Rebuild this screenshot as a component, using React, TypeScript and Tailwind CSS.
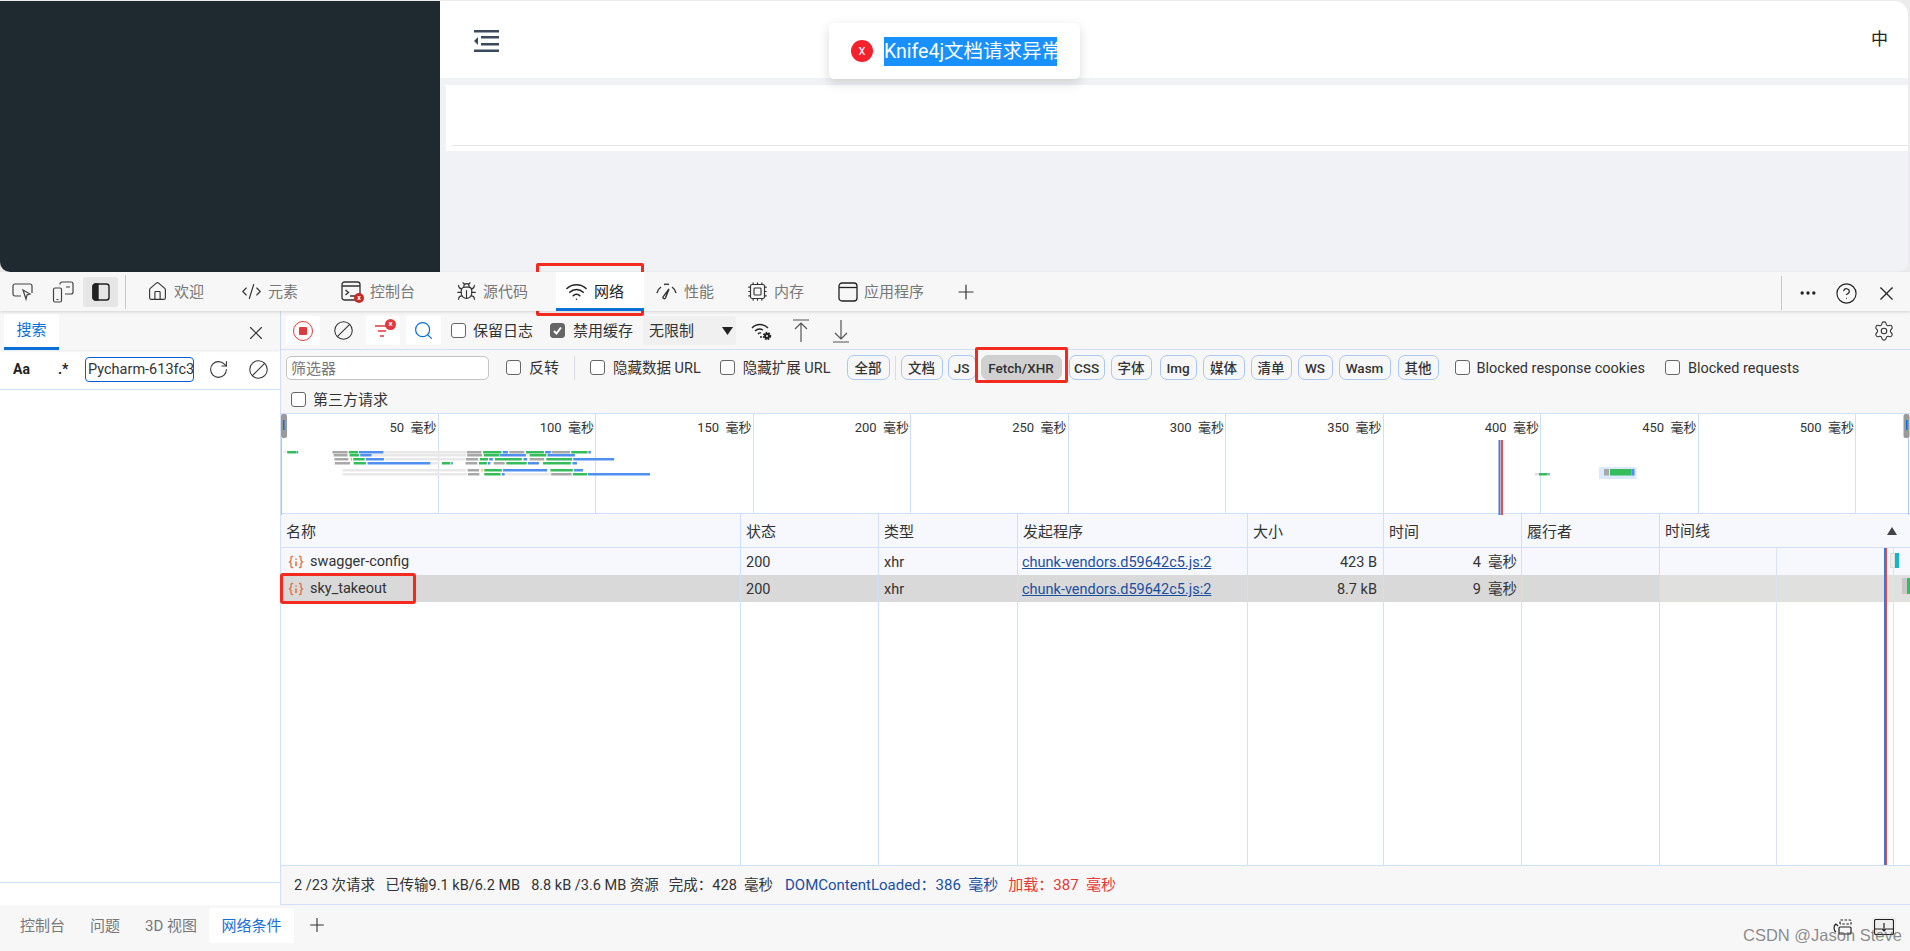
import { Ban, Bug, CircleHelp, CodeXml, Cpu, Ellipsis, House, Plus, RotateCw, Search, Settings, Wifi, X } from 'lucide-react';

const px = (z: number) => 270 + z / 2.45;

// overview bars, [start, end, kind] measured along the waterfall
type Bar = [number, number, 'g' | 'n' | 'b' | 'l' | 'y'];
const barColors = { g: '#a8a8a8', n: '#35bd5c', b: '#4f8ff0', l: '#e8e8e8', y: '#f2b530' };

const waterfall: { y: number; bars: Bar[] }[] = [
  { y: 450, bars: [[35, 40, 'l'], [42, 65, 'n'], [66, 69, 'b'], [153, 190, 'g'], [193, 216, 'n'], [218, 278, 'b'], [280, 480, 'l'], [482, 518, 'g'], [522, 567, 'n'], [570, 583, 'b'], [586, 623, 'g'], [627, 671, 'n'], [674, 688, 'b'], [690, 735, 'g'], [738, 778, 'n'], [780, 786, 'b']] },
  { y: 453, bars: [[156, 190, 'g'], [195, 218, 'n'], [221, 249, 'b'], [250, 480, 'l'], [483, 520, 'g'], [524, 562, 'n'], [563, 627, 'b'], [629, 633, 'l'], [636, 677, 'n'], [680, 747, 'b']] },
  { y: 457, bars: [[158, 192, 'g'], [198, 201, 'y'], [204, 232, 'n'], [235, 279, 'b'], [281, 478, 'l'], [480, 510, 'g'], [514, 534, 'n'], [537, 546, 'b'], [551, 617, 'n'], [621, 630, 'b'], [636, 672, 'g'], [677, 740, 'n'], [743, 843, 'b']] },
  { y: 461, bars: [[159, 196, 'g'], [205, 235, 'n'], [239, 393, 'b'], [395, 415, 'l'], [421, 442, 'n'], [444, 448, 'b'], [479, 508, 'g'], [512, 532, 'n'], [534, 540, 'b'], [548, 575, 'g'], [579, 629, 'n'], [632, 659, 'b'], [669, 737, 'n'], [741, 752, 'b']] },
  { y: 468, bars: [[178, 480, 'l'], [484, 512, 'g'], [518, 521, 'y'], [525, 568, 'n'], [571, 679, 'b'], [687, 742, 'n'], [745, 767, 'b']] },
  { y: 472, bars: [[178, 483, 'l'], [485, 513, 'g'], [525, 565, 'n'], [568, 575, 'b'], [577, 688, 'l'], [689, 739, 'g'], [742, 777, 'n'], [779, 931, 'b']] },
];

function InspectIcon() {
  return (
    <svg width="22" height="20" viewBox="0 0 22 20" fill="none" stroke="#444" strokeWidth="1.2">
      <path d="M9 14H3a2 2 0 0 1-2-2V4a2 2 0 0 1 2-2h15a2 2 0 0 1 2 2v7" />
      <path d="M11 8l7 4-3 1 -1 4z" />
    </svg>
  );
}

function DeviceIcon() {
  return (
    <svg width="22" height="22" viewBox="0 0 22 22" fill="none" stroke="#444" strokeWidth="1.2">
      <path d="M8 3.5V3a2 2 0 0 1 2-2h9a2 2 0 0 1 2 2v8a2 2 0 0 1-2 2h-6" />
      <rect x="1.5" y="7" width="8" height="14" rx="1.5" />
      <path d="M4.5 18.5h2M14 6h4" />
    </svg>
  );
}

function DockIcon() {
  return (
    <svg width="18" height="18" viewBox="0 0 18 18" fill="none" stroke="#222" strokeWidth="1.4">
      <rect x="1" y="1" width="16" height="16" rx="2.5" />
      <path d="M1 3.5a2.5 2.5 0 0 1 2.5-2.5H6v16H3.5A2.5 2.5 0 0 1 1 14.5z" fill="#222" />
    </svg>
  );
}

function ConsoleIcon() {
  return (
    <div className="relative w-[23px] h-[22px]">
      <svg width="20" height="20" viewBox="0 0 20 20" fill="none" stroke="#333" strokeWidth="1.3">
        <rect x="1" y="1" width="18" height="18" rx="2.5" />
        <path d="M1 5h18M4.5 9l3 2.5-3 2.5M9 15h5" />
      </svg>
      <div className="absolute right-0 bottom-0 w-[10px] h-[10px] rounded-full bg-[#c9282d] text-white text-[7px] leading-[10px] text-center font-bold">x</div>
    </div>
  );
}

function GaugeIcon() {
  return (
    <svg width="23" height="20" viewBox="0 0 23 20" fill="none" stroke="#333" strokeWidth="1.4">
      <path d="M2 11a9.5 9.5 0 0 1 4-6M9 2.5a9.5 9.5 0 0 1 5 0M17 5a9.5 9.5 0 0 1 4 6" />
      <path d="M14 7l-3.500 9a1.400 1.400 0 0 1-2.600-.8z" />
    </svg>
  );
}

function AppIcon() {
  return (
    <svg width="20" height="20" viewBox="0 0 20 20" fill="none" stroke="#222" strokeWidth="1.3">
      <rect x="1" y="1" width="18" height="18" rx="3" />
      <path d="M1 5.5h18" />
    </svg>
  );
}

function NetworkGear() {
  return (
    <svg width="22" height="22" viewBox="0 0 22 22" fill="none" stroke="#222" strokeWidth="1.4">
      <path d="M1 8a11 11 0 0 1 16 0M4 11a7 7 0 0 1 8-1M7 14a3 3 0 0 1 3-1" />
      <circle cx="10" cy="17" r="1" fill="#222" stroke="none" />
      <circle cx="16" cy="16" r="3" fill="#222" stroke="#222" strokeDasharray="1.5 1" strokeWidth="2.4" />
      <circle cx="16" cy="16" r="1" fill="#f7f7f7" stroke="none" />
    </svg>
  );
}

function XhrIcon() {
  return (
    <svg width="16" height="16" viewBox="0 0 16 16" fill="none" stroke="#e2703a" strokeWidth="1.3">
      <path d="M5 2.5H4a1 1 0 0 0-1 1V6.5L1.5 8 3 9.5v3a1 1 0 0 0 1 1h1" />
      <path d="M11 2.5h1a1 1 0 0 1 1 1V6.5L14.5 8 13 9.5v3a1 1 0 0 1-1 1h-1" />
      <path d="M8 7.5v4.5M8 4.5v1.3" strokeWidth="1.6" />
    </svg>
  );
}

function Check({ checked = false }: { checked?: boolean }) {
  return (
    <span className={`w-[15px] h-[15px] shrink-0 rounded-[3px] border flex items-center justify-center ${checked ? 'bg-[#666] border-[#666]' : 'bg-white border-[#666]'}`}>
      {checked && (
        <svg width="11" height="11" viewBox="0 0 11 11" fill="none" stroke="#fff" strokeWidth="2">
          <path d="M2 6l2.5 2.5L9 2.5" />
        </svg>
      )}
    </span>
  );
}

function Label({ children, className = '' }: { children: React.ReactNode; className?: string }) {
  return <span className={`${className} pt-[2px]`}>{children}</span>;
}

function Chip({ label, width, active = false, className = '' }: { label: string; width: string; active?: boolean; className?: string }) {
  return (
    <span className={`${width} ${className} h-[25px] pt-[1px] shrink-0 rounded-[7px] border flex items-center justify-center text-[13.5px] font-medium text-[#333] ${active ? 'bg-[#d0d0d0] border-[#d0d0d0]' : 'border-[#a9c8f5]'}`}>
      {label}
    </span>
  );
}

const tabs = [
  { label: '欢迎', icon: <House size={21} strokeWidth={1.3} color="#333" />, cls: 'ml-[12px] w-[76px]' },
  { label: '元素', icon: <CodeXml size={21} strokeWidth={1.3} color="#333" />, cls: 'ml-[18px] w-[76px]' },
  { label: '控制台', icon: <ConsoleIcon />, cls: 'ml-[24px] w-[90px]' },
  { label: '源代码', icon: <Bug size={21} strokeWidth={1.3} color="#333" />, cls: 'ml-[25px] w-[92px]' },
  { label: '网络', icon: <Wifi size={23} strokeWidth={1.6} color="#222" />, cls: 'ml-[17px] w-[88px]', active: true },
  { label: '性能', icon: <GaugeIcon />, cls: 'ml-[2px] w-[77px]' },
  { label: '内存', icon: <Cpu size={21} strokeWidth={1.3} color="#333" />, cls: 'ml-[15px] w-[76px]' },
  { label: '应用程序', icon: <AppIcon />, cls: 'ml-[15px] w-[105px]' },
];

const cols = [
  { name: '名称', cls: 'w-[460px]' },
  { name: '状态', cls: 'w-[138px]' },
  { name: '类型', cls: 'w-[139px]' },
  { name: '发起程序', cls: 'w-[230px]' },
  { name: '大小', cls: 'w-[136px]' },
  { name: '时间', cls: 'w-[138px]' },
  { name: '履行者', cls: 'w-[138px]' },
];

const rows = [
  { name: 'swagger-config', size: '423 B', time: '4  毫秒', bg: 'bg-[#f6f8fd]', tl: 'bg-[#f6f8fd]' },
  { name: 'sky_takeout', size: '8.7 kB', time: '9  毫秒', bg: 'bg-[#d9d9d9]', tl: 'bg-[#e0e1df]' },
];

const marks = ['50  毫秒', '100  毫秒', '150  毫秒', '200  毫秒', '250  毫秒', '300  毫秒', '350  毫秒', '400  毫秒', '450  毫秒', '500  毫秒'];

export default function App() {
  return (
    <div className="relative w-[1910px] h-[951px] overflow-hidden bg-[#f7f7f7] text-[#333] text-[14.5px] whitespace-pre font-['Roboto','Noto_Sans_CJK_SC',sans-serif]">
      {/* page under inspection */}
      <div className="flex h-[272px] pt-px pr-[2px] bg-[#ececec]">
        <div className="w-[440px] bg-[#1f2a30] rounded-bl-[10px]" />
        <div className="flex-1 flex flex-col bg-[#f0f2f5] rounded-tr-[14px] rounded-br-[10px] overflow-hidden">
          <div className="h-[77px] bg-white flex items-center justify-between pl-[34px] pr-[20px] pt-[3px]">
            <svg width="25" height="22" viewBox="0 0 25 22" fill="#3b4a5a">
              <path d="M0 0h25v2.5H0zM0 19.500h25V22H0zM7 6h18v2.500H7zM7 13h18v2.500H7zM4 7v8L0 11z" />
            </svg>
            <span className="text-[17px] text-[#222] leading-none mb-[4px]">中</span>
          </div>
          <div className="mt-[7px] ml-[6px] h-[66px] bg-white pt-[60px] pl-[6px]">
            <div className="h-[1px] bg-[#e6e6e6]" />
          </div>
        </div>
      </div>

      {/* devtools main tab bar */}
      <div className="relative z-10 h-[39px] flex items-center bg-[#f7f7f7] shadow-[0_1px_3px_rgba(0,0,0,0.15)]">
        <div className="w-[126px] h-[34px] flex items-center border-r border-[#c9c9c9] pl-[12px]">
          <span className="w-[22px] flex justify-center"><InspectIcon /></span>
          <span className="ml-[18px] w-[22px] flex justify-center"><DeviceIcon /></span>
          <span className="ml-[9px] w-[35px] h-[30px] rounded-[3px] bg-[#e6e6e6] flex items-center justify-center"><DockIcon /></span>
        </div>
        {tabs.map(t => (
          <div key={t.label} className={`${t.cls} h-full flex items-center gap-[6px] pl-[9px] ${t.active ? 'bg-white border-b-[3px] border-[#0a6fd6] text-[#222] pt-[3px]' : 'text-[#777]'}`}>
            {t.icon}
            <span className="text-[15px] pt-[1px]">{t.label}</span>
          </div>
        ))}
        <Plus size={24} strokeWidth={1.2} color="#333" className="ml-[20px]" />
        <div className="ml-auto w-[129px] h-[34px] border-l border-[#c9c9c9] flex items-center pl-[16px] mb-[-3px]">
          <Ellipsis size={20} color="#222" />
          <CircleHelp size={23} strokeWidth={1.2} color="#222" className="ml-[17px]" />
          <X size={23} strokeWidth={1.2} color="#222" className="ml-[17px]" />
        </div>
      </div>

      <div className="flex h-[594px]">
        {/* search panel */}
        <div className="w-[281px] flex flex-col bg-white border-r border-[#d0e0f8]">
          <div className="h-[39px] flex items-start justify-between bg-[#f7f7f7] pl-[4px] pr-[13px] shadow-[0_1px_2px_rgba(0,0,0,0.1)]">
            <span className="mt-[3px] w-[55px] h-[36px] bg-white border-b-[3px] border-[#0a6fd6] text-[#0a6fd6] text-[15px] flex items-center justify-center">搜索</span>
            <X size={22} strokeWidth={1.2} color="#333" className="mt-[11px]" />
          </div>
          <div className="h-[40px] flex items-center border-b border-[#d0e0f8]">
            <span className="ml-[13px] w-[20px] text-[14px] font-bold text-[#222]">Aa</span>
            <span className="ml-[25px] w-[16px] text-[14px] font-bold text-[#222]">.*</span>
            <input readOnly value="Pycharm-613fc3" className="ml-[11px] w-[109px] h-[25px] border border-[#0a5fd0] rounded-[4px] pl-[2px] text-[14.5px] text-[#333] outline-none" />
            <RotateCw size={21} strokeWidth={1.2} color="#333" className="ml-[14px]" />
            <Ban size={21} strokeWidth={1.2} color="#333" className="ml-[19px] rotate-90" />
          </div>
          <div className="flex-1" />
          <div className="h-[23px] border-t border-[#d0e0f8]" />
        </div>

        {/* network panel */}
        <div className="flex-1 flex flex-col min-w-0">
          <div className="h-[39px] flex items-center border-b border-[#d0e0f8] bg-[#f7f7f7] pl-[5px] pt-[1px]">
            <span className="w-[34px] h-[29px] bg-white rounded-[2px] flex items-center justify-center">
              <span className="w-[20px] h-[20px] rounded-full border border-[#e0393e] flex items-center justify-center">
                <span className="w-[8px] h-[8px] rounded-[1px] bg-[#e0393e]" />
              </span>
            </span>
            <span className="ml-[6px] w-[34px] flex justify-center"><Ban size={21} strokeWidth={1.2} color="#333" className="rotate-90" /></span>
            <span className="relative ml-[6px] w-[34px] h-[29px] bg-white rounded-[2px] flex items-center justify-center">
              <svg width="18" height="14" viewBox="0 0 18 14" stroke="#e0393e" strokeWidth="1.3"><path d="M1 2h14M4 7h8M6 12h4" /></svg>
              <span className="absolute right-[4px] top-[3px] w-[11px] h-[11px] rounded-full bg-[#e0393e] text-white text-[8px] leading-[10px] text-center font-bold">x</span>
            </span>
            <span className="ml-[6px] w-[35px] h-[29px] bg-white rounded-[2px] flex items-center justify-center"><Search size={21} strokeWidth={1.4} color="#0a6fd6" /></span>
            <span className="ml-[10px]"><Check /></span>
            <Label className="ml-[7px] text-[15px]">保留日志</Label>
            <span className="ml-[17px]"><Check checked /></span>
            <Label className="ml-[8px] text-[15px]">禁用缓存</Label>
            <span className="ml-[10px] w-[93px] h-[29px] bg-[#f0f0f0] rounded-[2px] flex items-center justify-between pl-[6px] pr-[2px]">
              <Label className="text-[15px]">无限制</Label>
              <svg width="12" height="8" viewBox="0 0 12 8" fill="#222"><path d="M0 0h11L5.500 8z" /></svg>
            </span>
            <span className="ml-[15px]"><NetworkGear /></span>
            <svg className="ml-[20px]" width="16" height="24" viewBox="0 0 16 24" fill="none" stroke="#555" strokeWidth="1.2"><path d="M0 1h16M8 23V4M2 10l6-6 6 6" /></svg>
            <svg className="ml-[24px]" width="16" height="24" viewBox="0 0 16 24" fill="none" stroke="#555" strokeWidth="1.2"><path d="M0 23h16M8 1v19M2 14l6 6 6-6" /></svg>
            <Settings size={22} strokeWidth={1.2} color="#333" className="ml-auto mr-[15px]" />
          </div>

          <div className="h-[63px] bg-[#f7f7f7] pl-[5px] pt-[5px]">
            <div className="h-[25px] flex items-center">
              <input readOnly placeholder="筛选器" className="w-[203px] h-[24px] pt-[2px] bg-white border border-[#c4c4c4] rounded-[5px] pl-[4px] text-[15px] outline-none placeholder:text-[#777]" />
              <span className="ml-[17px]"><Check /></span>
              <Label className="ml-[8px] text-[15px]">反转</Label>
              <span className="ml-[15px] w-px h-[24px] bg-[#d4deea]" />
              <span className="ml-[15px]"><Check /></span>
              <Label className="ml-[8px]">隐藏数据 URL</Label>
              <span className="ml-[19px]"><Check /></span>
              <Label className="ml-[8px]">隐藏扩展 URL</Label>
              <Chip label="全部" width="w-[43px]" className="ml-[16px]" />
              <span className="ml-[5px] w-px h-[24px] bg-[#d4deea]" />
              <Chip label="文档" width="w-[42px]" className="ml-[5px]" />
              <Chip label="JS" width="w-[28px]" className="ml-[5px]" />
              <Chip label="Fetch/XHR" width="w-[81px]" active className="ml-[5px]" />
              <Chip label="CSS" width="w-[36px]" className="ml-[7px]" />
              <Chip label="字体" width="w-[41px]" className="ml-[6px]" />
              <Chip label="Img" width="w-[37px]" className="ml-[8px]" />
              <Chip label="媒体" width="w-[42px]" className="ml-[6px]" />
              <Chip label="清单" width="w-[41px]" className="ml-[6px]" />
              <Chip label="WS" width="w-[35px]" className="ml-[6px]" />
              <Chip label="Wasm" width="w-[52px]" className="ml-[6px]" />
              <Chip label="其他" width="w-[41px]" className="ml-[7px]" />
              <span className="ml-[16px]"><Check /></span>
              <Label className="ml-[7px]">Blocked response cookies</Label>
              <span className="ml-[20px]"><Check /></span>
              <Label className="ml-[8px]">Blocked requests</Label>
            </div>
            <div className="mt-[7px] h-[24px] flex items-center pl-[5px]">
              <Check />
              <Label className="ml-[7px] text-[15px]">第三方请求</Label>
            </div>
          </div>

          {/* overview */}
          <div className="relative h-[101px] flex bg-white border-t border-b border-[#d0e0f8]">
            {marks.map(m => (
              <div key={m} className="w-[157.5px] shrink-0 border-r border-[#d0e0f8] text-right pr-[1px] text-[13px] leading-[27px] text-[#333]">
                {m}
              </div>
            ))}
            <svg className="absolute left-0 top-0" width="1629" height="101" viewBox="281 413 1629 101">
              {waterfall.map(row =>
                row.bars.map(([a, b, k]) => (
                  <rect key={`${row.y}-${a}`} x={px(a)} y={row.y} width={px(b) - px(a)} height={2.5} fill={barColors[k]} />
                ))
              )}
              <rect x={1498.5} y={439} width={2} height={75} fill="#5a78c8" />
              <rect x={1501} y={439} width={2} height={75} fill="#e0524f" />
              <rect x={1535} y={472} width={7} height={2.5} fill="#e0e0e0" />
              <rect x={1539} y={472} width={8} height={2.5} fill="#35bd5c" />
              <rect x={1547} y={472} width={3} height={2.5} fill="#8ab4f0" />
              <rect x={1599} y={466} width={37.500} height={12} fill="#dce8fb" />
              <rect x={1604} y={468} width={5} height={6.500} fill="#a8a8a8" />
              <rect x={1610} y={468} width={21.500} height={6.500} fill="#35bd5c" />
              <rect x={1631.500} y={468} width={3} height={6.500} fill="#4f8ff0" />
              <rect x={281} y={413} width={6} height={24} rx={2} fill="#9a9a9a" />
              <rect x={283} y={419} width={1.500} height={10} fill="#0a6fd6" />
              <rect x={1903.500} y={413} width={6} height={24} rx={2} fill="#9a9a9a" />
              <rect x={1906} y={419} width={1.500} height={10} fill="#0a6fd6" />
              <rect x={281} y={437} width={1} height={77} fill="#a9c8f5" />
              <rect x={1908} y={437} width={1} height={77} fill="#a9c8f5" />
            </svg>
          </div>

          {/* request table */}
          <div className="h-[34px] flex bg-[#f6f8fd] border-b border-[#d0e0f8] leading-[36px] text-[15px]">
            {cols.map(c => (
              <div key={c.name} className={`${c.cls} shrink-0 border-r border-[#d0e0f8] pl-[5px]`}>{c.name}</div>
            ))}
            <div className="flex-1 flex justify-between pl-[5px] pr-[13px] items-center">
              时间线
              <svg width="10" height="8" viewBox="0 0 10 8" fill="#444"><path d="M5 0l5 8H0z" /></svg>
            </div>
          </div>
          {rows.map(r => (
            <div key={r.name} className="h-[27px] flex leading-[29px]">
              <div className={`${r.bg} w-[460px] shrink-0 border-r border-[#d0e0f8] pl-[7px] flex items-center gap-[6px]`}><XhrIcon /><span>{r.name}</span></div>
              <div className={`${r.bg} w-[138px] shrink-0 border-r border-[#d0e0f8] pl-[5px]`}>200</div>
              <div className={`${r.bg} w-[139px] shrink-0 border-r border-[#d0e0f8] pl-[5px]`}>xhr</div>
              <div className={`${r.bg} w-[230px] shrink-0 border-r border-[#d0e0f8] pl-[4px] text-[#1a4fa0] underline`}>chunk-vendors.d59642c5.js:2</div>
              <div className={`${r.bg} w-[136px] shrink-0 border-r border-[#d0e0f8] pr-[6px] text-right`}>{r.size}</div>
              <div className={`${r.bg} w-[138px] shrink-0 border-r border-[#d0e0f8] pr-[4px] text-right`}>{r.time}</div>
              <div className={`${r.bg} w-[138px] shrink-0 border-r border-[#d0e0f8]`} />
              <div className={`${r.tl} flex-1`} />
            </div>
          ))}
          <div className="relative flex-1 flex bg-white">
            {cols.map(c => (
              <div key={c.name} className={`${c.cls} shrink-0 border-r border-[#d0e0f8]`} />
            ))}
          </div>

          <div className="h-[40px] flex items-center bg-[#f7f7f7] border-t border-b border-[#d0e0f8] pl-[13px] pt-[1px]">
            <span>2 /23 次请求</span>
            <span className="ml-[10px]">已传输9.1 kB/6.2 MB</span>
            <span className="ml-[11px]">8.8 kB /3.6 MB 资源</span>
            <span className="ml-[10px]">完成：428  毫秒</span>
            <span className="ml-[12px] text-[15px] text-[#1a4fa0]">DOMContentLoaded：386  毫秒</span>
            <span className="ml-[10px] text-[15px] text-[#e53935]">加载：387  毫秒</span>
          </div>
        </div>
      </div>

      {/* timeline column overlays the rows */}
      <div className="absolute left-[1776px] top-[548px] w-px h-[317px] bg-[#d9e4f6]" />
      <div className="absolute left-[1893px] top-[548px] w-px h-[317px] bg-[#d9e4f6]" />
      <div className="absolute left-[1884px] top-[548px] w-[1.500px] h-[317px] bg-[#3f78d0]" />
      <div className="absolute left-[1885.500px] top-[548px] w-[1.500px] h-[317px] bg-[#e0524f]" />
      <div className="absolute left-[1890px] top-[553px] w-[5px] h-[15px] bg-[#eee] border border-[#ddd]" />
      <div className="absolute left-[1895px] top-[553px] w-[3.500px] h-[15px] bg-[#12b5cb]" />
      <div className="absolute left-[1902px] top-[578px] w-[5px] h-[16px] bg-[#c8c8c8]" />
      <div className="absolute left-[1907px] top-[578px] w-[3px] h-[16px] bg-[#35bd5c]" />

      {/* drawer */}
      <div className="h-[46px] flex items-start bg-[#f7f7f7] text-[#777] text-[15px] pt-[3px]">
        <span className="ml-[20px] leading-[37px]">控制台</span>
        <span className="ml-[25px] leading-[37px]">问题</span>
        <span className="ml-[25px] leading-[37px]">3D 视图</span>
        <span className="ml-[12px] w-[85px] h-[35px] bg-white rounded-[3px] text-[#1a6ed8] leading-[37px] text-center">网络条件</span>
        <Plus size={22} strokeWidth={1.2} color="#333" className="ml-[12px] mt-[6px]" />
        <div className="ml-auto flex items-center mt-[9px]">
          <svg width="20" height="16" viewBox="0 0 20 16" fill="none" stroke="#222" strokeWidth="1.2">
            <path d="M8 5V2a1 1 0 0 1 1-1h9a1 1 0 0 1 1 1v3H8" strokeDasharray="2.500 1.500" />
            <rect x="7" y="8" width="12" height="7" rx="1" />
            <path d="M4 5a5 5 0 0 0 0 8M4 5l-2 2M4 5l2 2" />
          </svg>
          <span className="ml-[20px] mr-[14px] w-[24px] h-[20px] bg-[#eee] rounded-[2px] flex items-center justify-center">
            <svg width="20" height="16" viewBox="0 0 20 16" fill="none" stroke="#222" strokeWidth="1.2">
              <rect x="0.500" y="0.500" width="19" height="15" rx="1.500" />
              <path d="M0 10h7M13 10h7M10 4v8M7.500 9.500l2.500 2.500 2.500-2.500" />
            </svg>
          </span>
        </div>
      </div>

      {/* toast */}
      <div className="absolute left-[829px] top-[23px] w-[251px] h-[56px] bg-white rounded-[5px] shadow-[0_4px_12px_rgba(0,0,0,0.15)] flex items-center pl-[22px]">
        <span className="w-[22px] h-[22px] rounded-full bg-[#f5222d] text-white text-[14px] leading-[20px] text-center">x</span>
        <span className="ml-[11px] h-[29px] w-[173px] bg-[#1890ff] text-white text-[19.5px] leading-[29px]">Knife4j文档请求异常</span>
      </div>

      {/* annotations */}
      <div className="absolute left-[536px] top-[263px] w-[108px] h-[53px] border-[3px] border-[#f52a1f] rounded-[2px]" />
      <div className="absolute left-[975px] top-[347px] w-[93px] h-[36px] border-[3px] border-[#f52a1f] rounded-[2px]" />
      <div className="absolute left-[280px] top-[573px] w-[136px] h-[31px] border-[3px] border-[#f52a1f] rounded-[3px]" />

      <div className="absolute left-[1743px] top-[925px] text-[16.500px] leading-[20px] font-['Liberation_Sans',sans-serif] text-[rgba(90,90,90,0.7)]">CSDN @Jason Steve</div>
    </div>
  );
}
